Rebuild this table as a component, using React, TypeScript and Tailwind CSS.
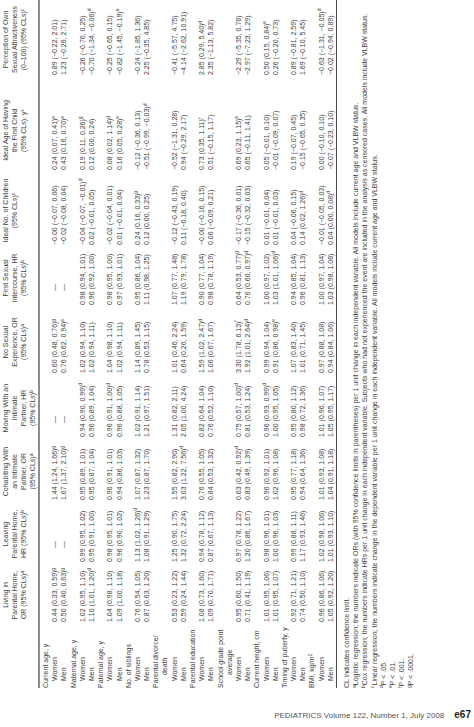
import React from "react";

type Row = { label: string; indent?: 0 | 1 | 2; cells?: string[] };

const headers = [
  ["Living in", "Parental Home,", "OR (95% CLs)^a"],
  ["Leaving", "Parental Home,", "HR (95% CLs)^b"],
  ["Cohabiting With", "an Intimate", "Partner, OR", "(95% CLs)^a"],
  ["Moving With an", "Intimate", "Partner, HR", "(95% CLs)^b"],
  ["No Sexual", "Experience, OR", "(95% CLs)^a"],
  ["First Sexual", "Intercourse, HR", "(95% CLs)^b"],
  ["Ideal No. of Children", "(95% CLs)^c"],
  ["Ideal Age of Having", "the First Child", "(95% CLs), y^c"],
  ["Perception of Own", "Sexual Attractiveness", "(0–100) (95% CLs)^c"],
];

const rows: Row[] = [
  { label: "Current age, y" },
  { label: "Women", indent: 1, cells: ["0.44 (0.33, 0.59)^g", "—", "1.44 (1.24, 1.66)^g", "—", "0.60 (0.48, 0.76)^g", "—", "−0.00 (−0.07, 0.06)", "0.24 (0.07, 0.41)^e", "0.89 (−0.22, 2.01)"] },
  { label: "Men", indent: 1, cells: ["0.50 (0.40, 0.63)^g", "—", "1.67 (1.37, 2.10)^g", "—", "0.76 (0.62, 0.94)^e", "—", "−0.02 (−0.08, 0.04)", "0.43 (0.16, 0.70)^e", "1.23 (−0.26, 2.71)"] },
  { label: "Maternal age, y" },
  { label: "Women", indent: 1, cells: ["1.02 (0.95, 1.10)", "0.99 (0.95, 1.02)", "0.95 (0.89, 1.01)", "0.94 (0.90, 0.99)^d", "1.02 (0.94, 1.10)", "0.98 (0.94, 1.01)", "−0.04 (−0.07, −0.01)^d", "0.19 (0.11, 0.26)^g", "−0.26 (−0.76, 0.25)"] },
  { label: "Men", indent: 1, cells: ["1.10 (1.01, 1.20)^d", "0.95 (0.91, 1.00)", "0.95 (0.87, 1.04)", "0.96 (0.89, 1.04)", "1.02 (0.94, 1.11)", "0.96 (0.92, 1.00)", "0.02 (−0.01, 0.05)", "0.12 (0.00, 0.24)", "−0.70 (−1.34, −0.06)^d"] },
  { label: "Paternal age, y" },
  { label: "Women", indent: 1, cells: ["1.04 (0.98, 1.10)", "0.98 (0.95, 1.01)", "0.96 (0.91, 1.01)", "0.96 (0.91, 1.00)^d", "1.04 (0.98, 1.10)", "0.98 (0.95, 1.00)", "−0.02 (−0.04, 0.01)", "0.08 (0.02, 1.14)^d", "−0.25 (−0.65, 0.15)"] },
  { label: "Men", indent: 1, cells: ["1.09 (1.00, 1.18)", "0.96 (0.90, 1.02)", "0.94 (0.86, 1.03)", "0.96 (0.88, 1.05)", "1.02 (0.94, 1.11)", "0.97 (0.93, 1.01)", "0.01 (−0.01, 0.04)", "0.16 (0.05, 0.28)^e", "−0.82 (−1.45, −0.19)^e"] },
  { label: "No. of siblings" },
  { label: "Women", indent: 1, cells: ["0.76 (0.54, 1.05)", "1.13 (1.02, 1.26)^d", "1.07 (0.87, 1.32)", "1.02 (0.91, 1.14)", "1.14 (0.89, 1.45)", "0.95 (0.86, 1.04)", "0.24 (0.16, 0.33)^g", "−0.12 (−0.36, 0.13)", "−0.24 (−1.85, 1.36)"] },
  { label: "Men", indent: 1, cells: ["0.87 (0.63, 1.20)", "1.08 (0.91, 1.29)", "1.23 (0.87, 1.70)", "1.21 (0.97, 1.51)", "0.78 (0.53, 1.15)", "1.11 (0.98, 1.25)", "0.12 (0.00, 0.25)", "−0.51 (−0.99, −0.03)^d", "2.25 (−0.35, 4.85)"] },
  { label: "Parental divorce/" },
  { label: "death", indent: 2 },
  { label: "Women", indent: 1, cells: ["0.53 (0.23, 1.22)", "1.25 (0.90, 1.75)", "1.55 (0.82, 2.90)", "1.31 (0.82, 2.11)", "1.01 (0.46, 2.24)", "1.07 (0.77, 1.48)", "−0.12 (−0.43, 0.19)", "−0.52 (−1.31, 0.28)", "−0.41 (−5.57, 4.75)"] },
  { label: "Men", indent: 1, cells: ["0.59 (0.24, 1.44)", "1.32 (0.72, 2.24)", "3.03 (1.22, 7.56)^d", "2.05 (1.00, 4.24)", "0.64 (0.26, 1.59)", "1.19 (0.79, 1.78)", "0.11 (−0.18, 0.40)", "0.94 (−0.29, 2.17)", "−4.14 (−2.62, 10.91)"] },
  { label: "Parental education" },
  { label: "Women", indent: 1, cells: ["1.08 (0.73, 1.60)", "0.94 (0.78, 1.12)", "0.76 (0.55, 1.05)", "0.82 (0.64, 1.04)", "1.59 (1.02, 2.47)^d", "0.90 (0.77, 1.04)", "−0.00 (−0.16, 0.15)", "0.73 (0.35, 1.11)^f", "2.85 (0.29, 5.40)^d"] },
  { label: "Men", indent: 1, cells: ["1.09 (0.70, 1.71)", "0.87 (0.67, 1.13)", "0.84 (0.53, 1.32)", "0.76 (0.52, 1.10)", "1.06 (0.67, 1.67)", "0.98 (0.78, 1.19)", "0.06 (−0.09, 0.21)", "0.51 (−0.15, 1.17)", "2.35 (−1.13, 5.82)"] },
  { label: "School grade point" },
  { label: "average", indent: 2 },
  { label: "Women", indent: 1, cells: ["0.95 (0.60, 1.50)", "0.97 (0.78, 1.22)", "0.63 (0.42, 0.92)^d", "0.75 (0.57, 1.00)^d", "3.30 (1.78, 6.13)^f", "0.64 (0.53, 0.77)^g", "−0.17 (−0.36, 0.01)", "0.69 (0.23, 1.15)^e", "−2.29 (−5.35, 0.78)"] },
  { label: "Men", indent: 1, cells: ["0.71 (0.41, 1.19)", "1.20 (0.86, 1.67)", "0.83 (0.49, 1.39)", "0.81 (0.53, 1.24)", "1.92 (1.01, 2.64)^d", "0.76 (0.60, 0.97)^d", "−0.15 (−0.32, 0.03)", "0.65 (−0.11, 1.41)", "−2.97 (−7.23, 1.29)"] },
  { label: "Current height, cm" },
  { label: "Women", indent: 1, cells: ["1.01 (0.95, 1.06)", "0.98 (0.96, 1.01)", "0.96 (0.92, 1.01)", "0.96 (0.93, 0.99)^d", "0.99 (0.94, 1.04)", "1.00 (0.97, 1.02)", "0.01 (−0.01, 0.04)", "0.05 (−0.01, 0.10)", "0.50 (0.15, 0.84)^e"] },
  { label: "Men", indent: 1, cells: ["1.01 (0.95, 1.07)", "1.00 (0.96, 1.03)", "1.02 (0.96, 1.08)", "1.00 (0.95, 1.05)", "0.91 (0.86, 0.98)^e", "1.03 (1.01, 1.06)^d", "0.01 (−0.01, 0.03)", "−0.01 (−0.09, 0.07)", "0.26 (−0.20, 0.73)"] },
  { label: "Timing of puberty, y" },
  { label: "Women", indent: 1, cells: ["0.92 (0.71, 1.21)", "0.99 (0.88, 1.11)", "0.95 (0.77, 1.18)", "0.95 (0.80, 1.12)", "1.07 (0.83, 1.40)", "0.94 (0.85, 1.04)", "0.04 (−0.06, 0.15)", "0.19 (−0.07, 0.45)", "0.89 (−0.81, 2.59)"] },
  { label: "Men", indent: 1, cells: ["0.74 (0.50, 1.10)", "1.17 (0.93, 1.46)", "0.94 (0.64, 1.36)", "0.98 (0.72, 1.36)", "1.01 (0.71, 1.45)", "0.96 (0.81, 1.13)", "0.14 (0.02, 1.26)^d", "−0.15 (−0.65, 0.35)", "1.69 (−0.10, 5.45)"] },
  { label: "BMI, kg/m^2" },
  { label: "Women", indent: 1, cells: ["0.96 (0.86, 1.06)", "1.02 (0.98, 1.06)", "1.01 (0.93, 1.08)", "1.01 (0.96, 1.07)", "0.97 (0.88, 1.08)", "1.00 (0.97, 1.04)", "−0.01 (−0.05, 0.03)", "0.00 (−0.10, 0.10)", "−0.63 (−1.31, −0.05)^d"] },
  { label: "Men", indent: 1, cells: ["1.05 (0.92, 1.20)", "1.01 (0.93, 1.10)", "1.04 (0.91, 1.18)", "1.05 (0.95, 1.17)", "0.94 (0.84, 1.06)", "1.03 (0.98, 1.08)", "0.04 (0.00, 0.08)^d", "−0.07 (−0.23, 0.10)", "−0.02 (−0.94, 0.89)"] },
];

const notes = [
  "CL indicates confidence limit.",
  "^aLogistic regression; the numbers indicate ORs (with 95% confidence limits in parentheses) per 1 unit change in each independent variable. All models include current age and VLBW status.",
  "^bCox regression; the numbers indicate HRs per 1 unit change in each independent variable. Subjects who had not experienced the event are included in the analysis as censored cases. All models include VLBW status.",
  "^cLinear regression; the numbers indicate change in the dependent variable per 1 unit change in each independent variable. All models include current age and VLBW status.",
  "^dP < .05.",
  "^eP < .01.",
  "^fP < .001.",
  "^gP < .0001.",
];

// widths of the data columns, written out so Tailwind sees them
const colW = ["w-[60px]", "w-[62px]", "w-[63px]", "w-[64px]", "w-[68px]", "w-[60px]", "w-[75px]", "w-[95px]", "w-[95px]"];
const headPad = ["pr-[6px]", "pr-[6px]", "pr-[6px]", "pr-[6px]", "pr-[6px]", "pr-[6px]", "pr-[6px]", "pr-[16px]", "pr-[24px]"];

// "text^x" -> text with superscript x; "^xtext" -> leading superscript
function Sup({ s }: { s: string }) {
  if (s.startsWith("^")) {
    return (
      <>
        <sup className="text-[5px]">{s[1]}</sup>
        {s.slice(2)}
      </>
    );
  }
  const i = s.indexOf("^");
  if (i < 0) return <>{s}</>;
  return (
    <>
      {s.slice(0, i)}
      <sup className="text-[5px]">{s.slice(i + 1)}</sup>
    </>
  );
}

const indents = ["pl-0", "pl-[7px]", "pl-[13px]"];

export default function App() {
  return (
    <div
      className="w-[474px] h-[727px] overflow-hidden bg-white text-[#3d3d3d] flex flex-col"
      style={{ fontFamily: '"Liberation Sans", Arial, sans-serif' }}
    >
      {/* rotated page: its top edge runs down the left side */}
      <div className="w-[474px] h-[702px] shrink-0">
        <div className="w-[702px] h-[474px] origin-top-left translate-y-[702px] -rotate-90 pl-[14px] text-[7px] leading-[9px]">
          <div className="w-[800px]">
            {/* column heads */}
            <div className="flex h-[40px] border-b-2 border-[#8d8d8d]">
              <div className="w-[66px] shrink-0" />
              {headers.map((h, i) => (
                <div key={i} className={`${colW[i]} ${headPad[i]} shrink-0 pt-[1px] text-center whitespace-nowrap`}>
                  {h.map((line, j) => (
                    <div key={j} className="h-[9px] leading-[9px]">
                      <Sup s={line} />
                    </div>
                  ))}
                </div>
              ))}
            </div>

            {/* body */}
            <div className="pt-[1px] pb-[1px] border-b border-[#4a4a4a]">
              {rows.map((r, i) => (
                <div key={i} className="flex h-[9.2px] leading-[9.2px] whitespace-nowrap">
                  <div className={`w-[66px] shrink-0 ${indents[r.indent ?? 0]}`}>
                    <Sup s={r.label} />
                  </div>
                  {r.cells &&
                    r.cells.map((c, j) => (
                      <div key={j} className={`${colW[j]} shrink-0 ${c === "—" ? "pl-[14px]" : ""}`}>
                        <Sup s={c} />
                      </div>
                    ))}
                </div>
              ))}
            </div>

            {/* footnotes */}
            <div className="pt-[5px] whitespace-nowrap">
              {notes.map((n, i) => (
                <div key={i} className="h-[9.2px] leading-[9.2px]">
                  <Sup s={n} />
                </div>
              ))}
            </div>
          </div>
        </div>
      </div>

      {/* running footer */}
      <div className="h-[25px] flex items-center justify-between pr-[3px]">
        <span className="ml-[80px] text-[7px] tracking-[6px] text-[#d3d9e4]">ˈˈˈ ˈ ˈ ˈˈ</span>
        <div className="flex items-baseline gap-[10px]">
          <span className="text-[8px] text-[#555]">PEDIATRICS Volume 122, Number 1, July 2008</span>
          <span className="text-[10px] font-bold text-[#222]">e67</span>
        </div>
      </div>
    </div>
  );
}
